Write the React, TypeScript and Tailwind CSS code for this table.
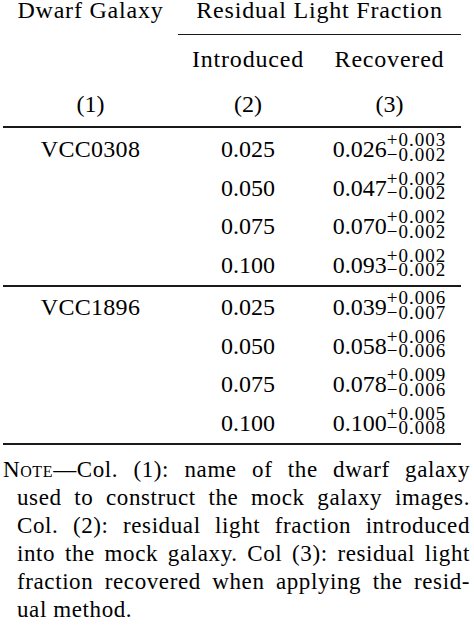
const group1 = [
  { name: "VCC0308", intro: "0.025", rec: "0.026", up: "+0.003", down: "−0.002" },
  { name: "", intro: "0.050", rec: "0.047", up: "+0.002", down: "−0.002" },
  { name: "", intro: "0.075", rec: "0.070", up: "+0.002", down: "−0.002" },
  { name: "", intro: "0.100", rec: "0.093", up: "+0.002", down: "−0.002" },
];

const group2 = [
  { name: "VCC1896", intro: "0.025", rec: "0.039", up: "+0.006", down: "−0.007" },
  { name: "", intro: "0.050", rec: "0.058", up: "+0.006", down: "−0.006" },
  { name: "", intro: "0.075", rec: "0.078", up: "+0.009", down: "−0.006" },
  { name: "", intro: "0.100", rec: "0.100", up: "+0.005", down: "−0.008" },
];

type RowData = (typeof group1)[number];

function Row({ row }: { row: RowData }) {
  return (
    <div className="grid h-[38.5px] grid-cols-[175px_140px_143px] items-center">
      <div className="text-center tracking-[0.3px]">{row.name}</div>
      <div className="text-center">{row.intro}</div>
      <div className="flex items-center justify-center">
        <span>{row.rec}</span>
        <span className="mb-[3px] flex flex-col text-[19px] leading-[14.5px] tracking-[1px]">
          <span>{row.up}</span>
          <span>{row.down}</span>
        </span>
      </div>
    </div>
  );
}

const serif = "font-['Liberation_Serif','Times_New_Roman',serif]";
const justified = "text-justify [text-align-last:justify] whitespace-nowrap";

export default function App() {
  return (
    <div className={`h-[628px] w-[474px] overflow-hidden bg-white text-black ${serif}`}>
      <div className={`ml-[3px] w-[458px] text-[24px] leading-[24px] ${serif}`}>
        {/* header */}
        <div className="grid h-[20px] grid-cols-[175px_283px] leading-[20px] tracking-[0.8px]">
          <div className="text-center">Dwarf Galaxy</div>
          <div className="text-center">Residual Light Fraction</div>
        </div>
        <div className="mt-[14px] ml-[175px] border-t border-[#1a1a1a]" />
        <div className="mt-[12px] grid grid-cols-[175px_140px_143px] tracking-[0.8px]">
          <div />
          <div className="text-center">Introduced</div>
          <div className="text-center">Recovered</div>
        </div>
        <div className="mt-[21px] grid grid-cols-[175px_140px_143px]">
          <div className="text-center">(1)</div>
          <div className="text-center">(2)</div>
          <div className="text-center">(3)</div>
        </div>
        <div className="mt-[10px] border-t-2 border-[#1a1a1a]" />

        <div className="pt-[2px]">
          {group1.map((r, i) => (
            <Row key={i} row={r} />
          ))}
        </div>
        <div className="mt-[1px] border-t-2 border-[#1a1a1a]" />
        <div className="pt-[1px]">
          {group2.map((r, i) => (
            <Row key={i} row={r} />
          ))}
        </div>
        <div className="mt-[1px] border-t-2 border-[#1a1a1a]" />
      </div>

      {/* table note */}
      <div className={`mt-[11px] ml-[3px] w-[467px] text-[23px] leading-[28px] tracking-[0.6px] ${serif}`}>
        <div className={justified}>
          <span className="[font-variant-caps:small-caps]">Note</span>—Col. (1): name of the dwarf galaxy
        </div>
        <div className={`pl-[14px] ${justified}`}>used to construct the mock galaxy images.</div>
        <div className={`pl-[14px] ${justified}`}>Col. (2): residual light fraction introduced</div>
        <div className={`pl-[14px] ${justified}`}>into the mock galaxy. Col (3): residual light</div>
        <div className={`pl-[14px] ${justified}`}>fraction recovered when applying the resid-</div>
        <div className="pl-[14px]">ual method.</div>
      </div>
    </div>
  );
}
